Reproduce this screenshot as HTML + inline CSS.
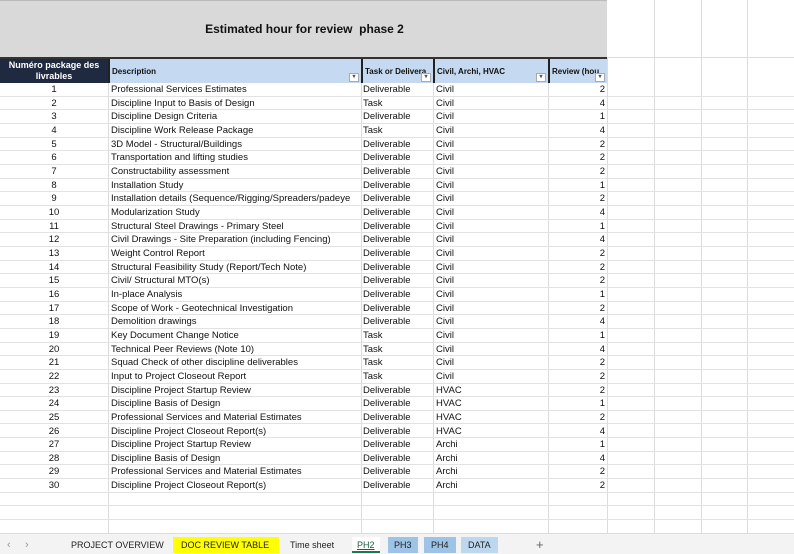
<!DOCTYPE html>
<html><head><meta charset="utf-8"><style>
*{margin:0;padding:0;box-sizing:border-box}
body{width:794px;height:554px;overflow:hidden;background:#fff;font-family:"Liberation Sans",sans-serif;position:relative;font-size:9.5px;color:#111}
.vl{position:absolute;top:0;width:1px;background:#dcdcdc;height:533px}
#top{position:absolute;left:0;top:0;width:607px;height:57px;background:#d9d9d9;border-top:1px solid #bbb}
#title{position:absolute;left:0;top:22px;width:607px;text-align:center;font-weight:bold;font-size:12px;padding-left:2px}
#hdr{position:absolute;top:57px;left:0;height:26px;width:607px;border-top:2px solid #333;border-bottom:2px solid #222}
.h{position:absolute;top:0;height:24px;background:#c5d9f1;font-weight:bold;font-size:8px;border-left:2px solid #222;padding:8px 2px 0;white-space:nowrap;overflow:hidden}
.dd{position:absolute;right:2px;bottom:1px;width:10px;height:9px;background:#fff;border:1px solid #aaa;font-size:6px;line-height:7px;text-align:center;color:#555}
.r{position:absolute;left:0;height:13.66px;width:794px;border-bottom:1px solid #e2e2e2;line-height:13px}
.r span{position:absolute;top:0;white-space:nowrap;overflow:hidden}
#tabs{position:absolute;left:0;top:533px;width:794px;height:21px;background:#f3f3f3;border-top:1px solid #ddd;font-size:9px}
.t{position:absolute;top:3px;height:16px;line-height:16px;padding:0 5px;color:#222;white-space:nowrap}
</style></head><body>
<div id="top"></div>
<div id="title">Estimated hour for review&nbsp; phase 2</div>
<div class="vl" style="left:654px"></div><div class="vl" style="left:701px"></div><div class="vl" style="left:747px"></div>
<div class="vl" style="left:108px;top:83px;height:450px"></div>
<div class="vl" style="left:361px;top:83px;height:450px"></div>
<div class="vl" style="left:433px;top:83px;height:450px"></div>
<div class="vl" style="left:548px;top:83px;height:450px"></div>
<div class="vl" style="left:607px;top:57px;height:476px"></div>
<div style="position:absolute;left:607px;top:57px;width:187px;height:1px;background:#dcdcdc"></div>
<div id="hdr">
<div class="h" style="left:0;width:108px;background:#1f2940;color:#fff;border-left:none;font-size:9px;text-align:center;padding:1px 0 0;line-height:11px;white-space:normal">Numéro package des livrables</div>
<div class="h" style="left:108px;width:253px">Description<div class="dd">▾</div></div>
<div class="h" style="left:361px;width:72px">Task or Delivera<div class="dd">▾</div></div>
<div class="h" style="left:433px;width:115px">Civil, Archi, HVAC<div class="dd">▾</div></div>
<div class="h" style="left:548px;width:59px;border-right:none">Review (hou<div class="dd">▾</div></div>
</div>
<div id="rows"></div>
<script>
var d=[["Professional Services Estimates","Deliverable","Civil",2],["Discipline Input to Basis of Design","Task","Civil",4],["Discipline Design Criteria","Deliverable","Civil",1],["Discipline Work Release Package","Task","Civil",4],["3D Model - Structural/Buildings","Deliverable","Civil",2],["Transportation and lifting  studies","Deliverable","Civil",2],["Constructability assessment","Deliverable","Civil",2],["Installation Study","Deliverable","Civil",1],["Installation details (Sequence/Rigging/Spreaders/padeye","Deliverable","Civil",2],["Modularization Study","Deliverable","Civil",4],["Structural Steel Drawings - Primary Steel","Deliverable","Civil",1],["Civil Drawings - Site Preparation (including Fencing)","Deliverable","Civil",4],["Weight Control Report","Deliverable","Civil",2],["Structural Feasibility Study  (Report/Tech Note)","Deliverable","Civil",2],["Civil/ Structural MTO(s)","Deliverable","Civil",2],["In-place Analysis","Deliverable","Civil",1],["Scope of Work - Geotechnical Investigation","Deliverable","Civil",2],["Demolition drawings","Deliverable","Civil",4],["Key Document Change Notice","Task","Civil",1],["Technical Peer Reviews (Note 10)","Task","Civil",4],["Squad Check of other discipline deliverables","Task","Civil",2],["Input to Project Closeout Report","Task","Civil",2],["Discipline Project Startup Review","Deliverable","HVAC",2],["Discipline Basis of Design","Deliverable","HVAC",1],["Professional Services and Material Estimates","Deliverable","HVAC",2],["Discipline Project Closeout Report(s)","Deliverable","HVAC",4],["Discipline Project Startup Review","Deliverable","Archi",1],["Discipline Basis of Design","Deliverable","Archi",4],["Professional Services and Material Estimates","Deliverable","Archi",2],["Discipline Project Closeout Report(s)","Deliverable","Archi",2]];
var h="";
for(var i=0;i<33;i++){var y=83+i*13.66;h+='<div class="r" style="top:'+y+'px">';
if(i<30){var r=d[i];h+='<span style="left:0;width:108px;text-align:center">'+(i+1)+'</span><span style="left:111px;width:250px">'+r[0]+'</span><span style="left:363px">'+r[1]+'</span><span style="left:436px">'+r[2]+'</span><span style="left:548px;width:57px;text-align:right">'+r[3]+'</span>';}
h+='</div>';}
document.getElementById("rows").innerHTML=h;
</script>
<div id="tabs">
<span class="t" style="left:2px;color:#999;font-size:11px">&lsaquo;</span><span class="t" style="left:20px;color:#999;font-size:11px">&rsaquo;</span>
<span class="t" style="left:66px">PROJECT OVERVIEW</span>
<span class="t" style="left:173px;background:#ffff00;padding:0 8px;width:106px">DOC REVIEW TABLE</span>
<span class="t" style="left:285px">Time sheet</span>
<span class="t" style="left:352px;background:#fff;color:#1a5e3a;border-bottom:2px solid #1a7a4a;text-decoration:underline">PH2</span>
<span class="t" style="left:388px;background:#9dc3e6;padding:0 6px">PH3</span>
<span class="t" style="left:424px;background:#9dc3e6;padding:0 7px">PH4</span>
<span class="t" style="left:461px;background:#bdd7ee;padding:0 7px">DATA</span>
<span class="t" style="left:531px;color:#666;font-size:13px">+</span>
</div>
</body></html>
